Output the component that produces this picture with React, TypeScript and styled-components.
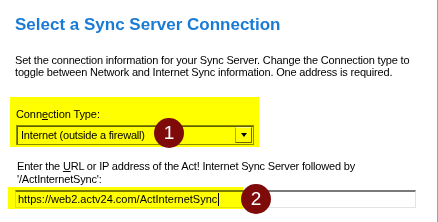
import React from "react";
import styled, { createGlobalStyle } from "styled-components";

const Global = createGlobalStyle`
  html, body { margin: 0; padding: 0; background: #ffffff; }
  body { width: 438px; height: 222px; overflow: hidden; }
`;

const Page = styled.div`
  box-sizing: border-box;
  width: 438px;
  height: 222px;
  border-right: 1px solid #a0a0a0;
  display: flex;
  flex-direction: column;
  padding: 13px 0 0 0;
  font-family: "Liberation Sans", Arial, sans-serif;
  font-size: 11px;
  color: #000000;
`;

const Title = styled.h1`
  margin: 0 0 0 15px;
  font-family: "Liberation Sans", Arial, sans-serif;
  font-weight: bold;
  font-size: 17px;
  line-height: 24px;
  color: #1a7bd6;
`;

const Description = styled.p`
  margin: 18px 0 0 15px;
  line-height: 11.5px;
  width: 415px;
  letter-spacing: -0.18px;
`;

const Highlight = styled.div`
  margin: 19px 0 0 10px;
  width: 249px;
  height: 50px;
  box-sizing: border-box;
  background: #ffff00;
  padding: 11px 5px 0 6px;
  display: flex;
  flex-direction: column;
  gap: 4px;
`;

const Label = styled.div`
  line-height: 13px;
  letter-spacing: -0.1px;
`;

const U = styled.span`
  text-decoration: underline;
`;

const ComboWrap = styled.div`
  position: relative;
`;

const Combo = styled.div`
  box-sizing: border-box;
  width: 238px;
  height: 20px;
  border: 1px solid #8c8c00;
  box-shadow: inset 1px 1px 0 #5f5f00;
  display: flex;
  align-items: center;
  padding-left: 4px;
`;

const ComboText = styled.span`
  flex: 1;
  line-height: 14px;
  letter-spacing: -0.2px;
`;

const DropButton = styled.div`
  box-sizing: border-box;
  width: 17px;
  height: 16px;
  margin-right: 1px;
  border-left: 1px solid #b0b000;
  border-top: 1px solid #ffff80;
  border-right: 1px solid #6a6a00;
  border-bottom: 1px solid #6a6a00;
  display: flex;
  align-items: center;
  justify-content: center;
`;

const Arrow = styled.span`
  width: 0;
  height: 0;
  border-left: 3.5px solid transparent;
  border-right: 3.5px solid transparent;
  border-top: 4px solid #000000;
`;

const Badge = styled.div<{ $left: number; $top: number }>`
  position: absolute;
  left: ${(p) => p.$left}px;
  top: ${(p) => p.$top}px;
  width: 30px;
  height: 30px;
  border-radius: 50%;
  background: #7e0a0a;
  color: #ffffff;
  font-family: "Liberation Sans", Arial, sans-serif;
  font-size: 19px;
  line-height: 30px;
  text-align: center;
`;

const Prompt = styled.p`
  margin: 13px 0 0 17px;
  line-height: 13px;
  letter-spacing: -0.18px;
`;

const InputRow = styled.div`
  position: relative;
  margin: 4px 0 0 15px;
  width: 401px;
`;

const Input = styled.div`
  box-sizing: border-box;
  height: 18px;
  border: 1px solid #e3e3e3;
  border-top: 2px solid #7a7a7a;
  padding-left: 2px;
  display: flex;
  align-items: center;
  line-height: 13px;
`;

const Caret = styled.span`
  display: inline-block;
  width: 1px;
  height: 13px;
  background: #000000;
  margin-left: 1px;
`;

const Marker = styled.div`
  position: absolute;
  left: -7px;
  top: -3px;
  width: 235px;
  height: 22px;
  background: #ffff00;
  mix-blend-mode: multiply;
  pointer-events: none;
`;

export default function App() {
  return (
    <>
      <Global />
      <Page>
        <Title>Select a Sync Server Connection</Title>
        <Description>
          Set the connection information for your Sync Server. Change the Connection type to
          toggle between Network and Internet Sync information. One address is required.
        </Description>
        <Highlight>
          <Label>
            Conn<U>e</U>ction Type:
          </Label>
          <ComboWrap>
            <Combo>
              <ComboText>Internet (outside a firewall)</ComboText>
              <DropButton>
                <Arrow />
              </DropButton>
            </Combo>
            <Badge $left={138} $top={-7}>1</Badge>
          </ComboWrap>
        </Highlight>
        <Prompt>
          Enter the <U>U</U>RL or IP address of the Act! Internet Sync Server followed by
          <br />
          '/ActInternetSync':
        </Prompt>
        <InputRow>
          <Input>
            https://web2.actv24.com/ActInternetSync
            <Caret />
          </Input>
          <Marker />
          <Badge $left={226} $top={-6}>2</Badge>
        </InputRow>
      </Page>
    </>
  );
}
